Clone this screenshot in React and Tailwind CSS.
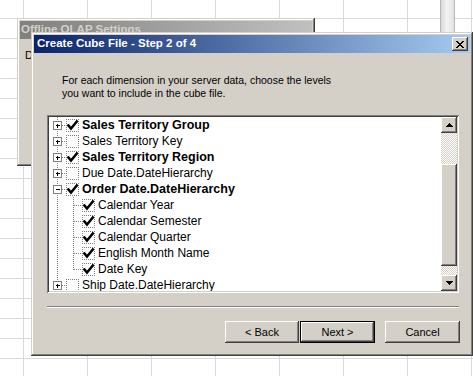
import React from 'react';

const RAISED = 'shadow-[inset_-1px_-1px_#404040,inset_1px_1px_#ffffff,inset_-2px_-2px_#808080,inset_2px_2px_#d4d0c8]';

const ROWS = [
  { label: 'Sales Territory Group', level: 0, open: false, checked: true, bold: true },
  { label: 'Sales Territory Key', level: 0, open: false, checked: false },
  { label: 'Sales Territory Region', level: 0, open: false, checked: true, bold: true },
  { label: 'Due Date.DateHierarchy', level: 0, open: false, checked: false },
  { label: 'Order Date.DateHierarchy', level: 0, open: true, checked: true, bold: true },
  { label: 'Calendar Year', level: 1, checked: true },
  { label: 'Calendar Semester', level: 1, checked: true },
  { label: 'Calendar Quarter', level: 1, checked: true },
  { label: 'English Month Name', level: 1, checked: true },
  { label: 'Date Key', level: 1, checked: true, last: true },
  { label: 'Ship Date.DateHierarchy', level: 0, open: false, checked: false },
];

const Gutter = ({ row }) => {
  const dot = { stroke: '#808080', strokeWidth: 1, strokeDasharray: '1 1' };
  if (row.level === 1) {
    return (
      <svg width="32" height="16" className="shrink-0" shapeRendering="crispEdges">
        <line x1="8.5" y1="0" x2="8.5" y2="16" {...dot} />
        <line x1="24.5" y1="0" x2="24.5" y2={row.last ? 9 : 16} {...dot} />
        <line x1="25" y1="8.5" x2="32" y2="8.5" {...dot} />
      </svg>
    );
  }
  return (
    <svg width="16" height="16" className="shrink-0" shapeRendering="crispEdges">
      <line x1="8.5" y1="0" x2="8.5" y2="16" {...dot} />
      <line x1="13" y1="8.5" x2="16" y2="8.5" {...dot} />
      <rect x="4.5" y="4.5" width="8" height="8" fill="#fff" stroke="#808080" />
      <line x1="6.5" y1="8.5" x2="11" y2="8.5" stroke="#000" />
      {!row.open && <line x1="8.5" y1="6.5" x2="8.5" y2="11" stroke="#000" />}
    </svg>
  );
};

const Check = ({ on }) => (
  <div className="ml-px w-[13px] h-[13px] shrink-0 border border-dotted border-[#808080] bg-white flex items-center justify-center">
    {on && (
      <svg width="11" height="11" viewBox="0 0 11 11">
        <polyline points="1.5,5.5 4,8.5 9.8,1.5" fill="none" stroke="#000" strokeWidth="2.5" strokeLinecap="square" />
      </svg>
    )}
  </div>
);

const Arrow = ({ down }) => (
  <svg width="7" height="4" shapeRendering="crispEdges">
    <path
      d={down ? 'M0 0h7v1H0zM1 1h5v1H1zM2 2h3v1H2zM3 3h1v1H3z' : 'M3 0h1v1H3zM2 1h3v1H2zM1 2h5v1H1zM0 3h7v1H0z'}
      fill="#000"
    />
  </svg>
);

const Scrollbar = () => (
  <div className="w-4 shrink-0 flex flex-col">
    <div className={`h-4 bg-[#d4d0c8] ${RAISED} flex items-center justify-center`}><Arrow /></div>
    <div className="h-[31px] bg-[image:repeating-conic-gradient(#d4d0c8_0_25%,#ffffff_0_50%)] bg-[size:2px_2px]" />
    <div className={`h-[102px] bg-[#d4d0c8] ${RAISED}`} />
    <div className="flex-1 bg-[image:repeating-conic-gradient(#d4d0c8_0_25%,#ffffff_0_50%)] bg-[size:2px_2px]" />
    <div className={`h-4 bg-[#d4d0c8] ${RAISED} flex items-center justify-center`}><Arrow down /></div>
  </div>
);

const Button = ({ children, primary, w = 'w-[75px]' }) => (
  <div className={`${w} h-[22px] ${primary ? 'border border-black' : ''} bg-[#d4d0c8]`}>
    <div className={`w-full h-full ${RAISED} flex items-center justify-center text-[11px] text-black`}>
      {children}
    </div>
  </div>
);

const OfflineWindow = () => (
  <div className="absolute left-[17px] top-[18px] w-[298px] h-[148px] bg-[#d4d0c8] p-[3px] shadow-[inset_-1px_-1px_#404040,inset_1px_1px_#d4d0c8,inset_-2px_-2px_#808080,inset_2px_2px_#ffffff]">
    <div className="h-[18px] flex items-center pl-[1px] bg-[image:linear-gradient(to_right,#808080,#c0c0c0)] text-[#d4d0c8] font-bold text-[11.5px]">
      Offline OLAP Settings
    </div>
    <div className="pt-[8px] pl-[5px] text-[11px] text-black">D</div>
  </div>
);

const Dialog = () => (
  <div className="absolute left-[31px] top-[32px] w-[442px] h-[324px] bg-[#d4d0c8] p-[3px] flex flex-col shadow-[inset_-1px_-1px_#404040,inset_1px_1px_#d4d0c8,inset_-2px_-2px_#808080,inset_2px_2px_#ffffff]">
    <div className="h-[18px] shrink-0 flex items-center justify-between pl-[3px] pr-[2px] bg-[image:linear-gradient(to_right,#0a246a,#a6caf0)]">
      <span className="text-white font-bold text-[11.5px]">Create Cube File - Step 2 of 4</span>
      <div className={`w-4 h-[14px] bg-[#d4d0c8] ${RAISED} flex items-center justify-center`}>
        <svg width="8" height="7" shapeRendering="crispEdges">
          <path
            d="M0 0h2v1H0zM6 0h2v1H6zM1 1h2v1H1zM5 1h2v1H5zM2 2h4v1H2zM3 3h2v1H3zM2 4h4v1H2zM1 5h2v1H1zM5 5h2v1H5zM0 6h2v1H0zM6 6h2v1H6z"
            fill="#000"
          />
        </svg>
      </div>
    </div>

    <p className="pt-[21px] pl-[28px] text-[10.5px] leading-[13px] text-black">
      For each dimension in your server data, choose the levels<br />
      you want to include in the cube file.
    </p>

    <div className="mt-[15px] ml-[13px] w-[412px] h-[178px] shrink-0 bg-white p-[2px] flex shadow-[inset_1px_1px_#808080,inset_-1px_-1px_#ffffff,inset_2px_2px_#404040,inset_-2px_-2px_#d4d0c8]">
      <div className="flex-1 overflow-hidden">
        {ROWS.map((r) => (
          <div key={r.label} className="h-4 flex items-center">
            <Gutter row={r} />
            <Check on={r.checked} />
            <span className={`ml-[3px] leading-4 whitespace-nowrap text-black ${r.bold ? 'font-bold text-[12.5px]' : 'text-[12px]'}`}>
              {r.label}
            </span>
          </div>
        ))}
      </div>
      <Scrollbar />
    </div>

    <div className="mt-[13px] ml-[13px] w-[412px] h-[2px] border-t border-b border-t-[#808080] border-b-white" />

    <div className="mt-[13px] flex justify-end pr-[10px]">
      <Button w="w-[74px]">&lt; Back</Button>
      <div className="ml-px">
        <Button primary>Next &gt;</Button>
      </div>
      <div className="ml-[10px]">
        <Button>Cancel</Button>
      </div>
    </div>
  </div>
);

export default function App() {
  return (
    <div className="relative w-[473px] h-[376px] overflow-hidden bg-white bg-[image:linear-gradient(to_right,#dadada_1px,transparent_1px),linear-gradient(to_bottom,#dadada_1px,transparent_1px)] bg-[size:64px_20px] bg-[position:23px_18px] font-['Liberation_Sans',Arial,sans-serif]">
      <div className="absolute left-[440px] top-0 w-[15px] h-[34px] border-l border-r border-[#b8b8b8] bg-[image:linear-gradient(to_right,#d8d8d8,#f4f4f4_45%,#e2e2e2)]" />
      <OfflineWindow />
      <Dialog />
    </div>
  );
}
